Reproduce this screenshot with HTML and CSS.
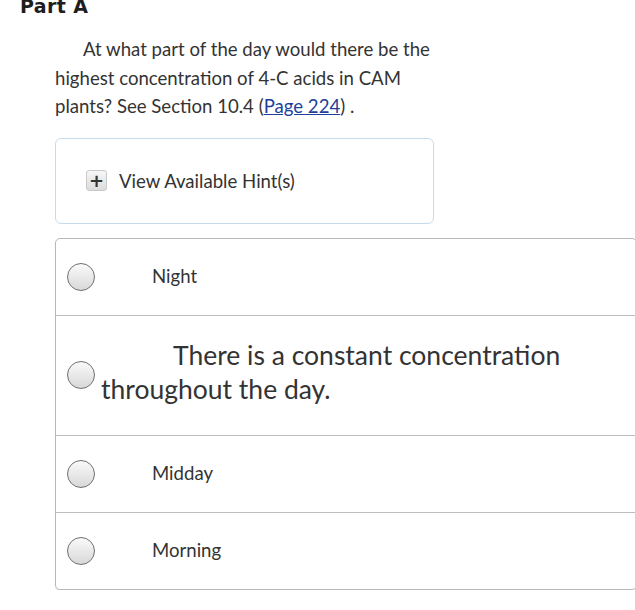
FILE: index.html
```
<!DOCTYPE html>
<html lang="en">

<head>
  <meta charset="UTF-8">
  <meta name="viewport" content="width=device-width, initial-scale=1.0">
  <title>Part A</title>
  <link rel="stylesheet" href="styles.css">
</head>

<body>

  <h2 class="part-title">Part A</h2>

  <p class="question">
    At what part of the day would there be the highest concentration of 4-C acids in CAM
    plants? See Section 10.4 (<a href="#">Page 224</a>) .
  </p>

  <div class="hint-box">
    <span class="hint-toggle">+</span>
    <span class="hint-text">View Available Hint(s)</span>
  </div>

  <div class="options">
    <label class="option row-small">
      <span class="radio"></span>
      <span class="option-text">Night</span>
    </label>
    <label class="option row-big">
      <span class="radio"></span>
      <span class="option-text big">There is a constant concentration throughout the day.</span>
    </label>
    <label class="option row-small">
      <span class="radio"></span>
      <span class="option-text">Midday</span>
    </label>
    <label class="option row-small last">
      <span class="radio"></span>
      <span class="option-text">Morning</span>
    </label>
  </div>

</body>

</html>
```
FILE: styles.css
```
body {
  font-family: Lato, "Open Sans", sans-serif;
  color: #333;
  margin: 0;
  background: #fff;
  overflow: hidden;
}

.part-title {
  margin: -5px 0 0 20px;
  font-family: "DejaVu Sans", sans-serif;
  font-size: 19px;
  font-weight: 700;
  letter-spacing: 0.4px;
  line-height: 22px;
  color: #1e1e1e;
}

.question {
  margin: 18px 0 0 55px;
  width: 385px;
  font-size: 18.6px;
  line-height: 28.5px;
  text-indent: 28px;
  color: #333;
}

.question a {
  color: #1d3f9a;
  text-decoration: underline;
}

.hint-box {
  box-sizing: border-box;
  margin: 17px 0 0 55px;
  width: 379px;
  height: 86px;
  border: 1px solid #c8dbed;
  border-radius: 6px;
  display: flex;
  align-items: center;
  padding-left: 30px;
}

.hint-toggle {
  box-sizing: border-box;
  width: 21px;
  height: 21px;
  border: 1px solid #c9c9c9;
  border-radius: 3px;
  background: linear-gradient(#f7f7f7, #dcdcdc);
  display: flex;
  align-items: center;
  justify-content: center;
  font-family: "DejaVu Sans", sans-serif;
  font-weight: 700;
  font-size: 18px;
  line-height: 1;
  color: #333;
}

.hint-text {
  margin-left: 12px;
  font-size: 18.6px;
  color: #333;
}

.options {
  box-sizing: border-box;
  margin: 14px 0 0 55px;
  width: 582px;
  border: 1px solid #b8b8b8;
  border-radius: 5px;
  box-shadow: 0 1px 1px #ddd;
}

.option {
  display: flex;
  align-items: center;
  padding-left: 11px;
  border-bottom: 1px solid #bdbdbd;
}

.option.last {
  border-bottom: none;
}

.row-small {
  height: 76px;
}

.row-big {
  height: 119px;
}

.radio {
  flex: none;
  box-sizing: border-box;
  width: 28px;
  height: 28px;
  border: 1.5px solid #6f6f6f;
  border-radius: 50%;
  background: linear-gradient(#fafafa, #d8d8d8);
}

.option-text {
  margin-left: 6px;
  font-size: 18.6px;
  text-indent: 51px;
  color: #333;
  margin-top: -2px;
}

.option-text.big {
  width: 480px;
  font-size: 26.5px;
  line-height: 34px;
  text-indent: 72px;
  margin-top: -6px;
}
```
